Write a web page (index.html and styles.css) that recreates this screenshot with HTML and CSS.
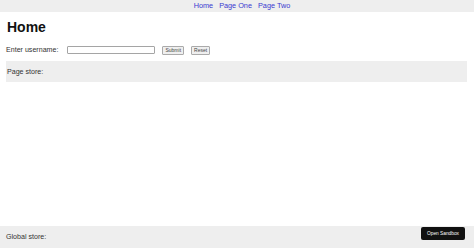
FILE: index.html
```html
<!DOCTYPE html>
<html>
<head>
<meta http-equiv="Content-Type" content="text/html; charset=utf-8">
<title>Home</title>
<link rel="stylesheet" href="styles.css">
</head>

<body>

<div class="app">
  <nav class="nav">
    <a class="nav__link" href="#">Home</a>
    <a class="nav__link" href="#">Page One</a>
    <a class="nav__link" href="#">Page Two</a>
  </nav>

  <main class="page">
    <h1 class="page__title">Home</h1>

    <form class="user-form">
      <label class="user-form__label" for="username">Enter username:</label>
      <input class="user-form__input" id="username" type="text" name="username" />
      <button class="user-form__btn" type="submit">Submit</button>
      <button class="user-form__btn" type="reset">Reset</button>
    </form>

    <div class="store store--page">Page store:</div>
  </main>

  <footer class="store store--global">Global store:</footer>
</div>

<a class="sandbox-btn" href="#">Open Sandbox</a>

</body>
</html>
```
FILE: styles.css
```css
/* reset */
body,div,h1,form,input,p,main,nav,footer{margin:0;padding:0}
h1{font-weight:700}

/* page */
html,body{font-family:"Liberation Sans",Arial,sans-serif;font-size:7px;color:#333;}
body{block-size:100vh;overflow:hidden;}

.app{display:flex;flex-direction:column;min-block-size:100vh;}

.nav{display:flex;justify-content:center;gap:6px;block-size:12px;line-height:12px;background-color:#eee;padding-inline-start:10px;}
.nav__link{color:#3a3ad0;text-decoration:none;font-size:7.3px;}

.page{padding:0 7px 0 6px;}
.page__title{font-size:14px;line-height:16px;margin:7px 0 0 1px;color:#111;}

.user-form{display:flex;align-items:center;block-size:10px;margin-block-start:10px;}
.user-form__label{font-size:7.1px;color:#333;margin-inline-end:9px;}
.user-form__input{inline-size:88px;block-size:8px;box-sizing:border-box;border:1px solid #a5a5a5;border-radius:1px;background:#fff;margin-inline-end:7px;padding:0;}
.user-form__btn{font-family:"Liberation Sans",Arial,sans-serif;font-size:5px;block-size:9px;line-height:7px;padding:0 2px;box-sizing:border-box;border:1px solid #aaa;border-radius:1px;background:#efefef;color:#444;margin-inline-end:7px;}
.user-form__btn:last-child{margin-inline-end:0;}

.store{display:flex;align-items:center;background-color:#eee;font-size:7.1px;color:#333;}
.store--page{block-size:21px;margin-block-start:6px;padding-inline-start:1px;}
.store--global{margin-block-start:auto;block-size:22px;padding-inline-start:6px;}

.sandbox-btn{position:fixed;inset-inline-end:9px;inset-block-end:8px;inline-size:44px;block-size:13px;display:flex;align-items:center;justify-content:center;background-color:#111;color:#fff;font-size:4.8px;border-radius:2px;text-decoration:none;}
```
